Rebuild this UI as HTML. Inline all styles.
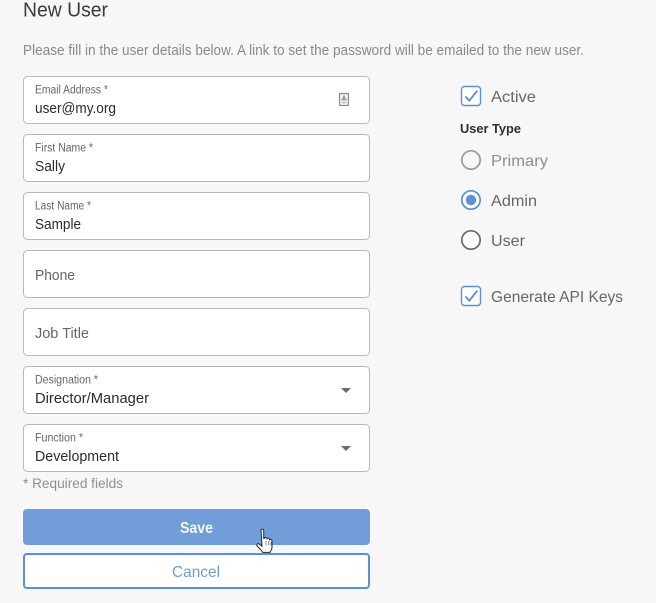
<!DOCTYPE html>
<html><head><meta charset="utf-8"><style>
html,body{margin:0;padding:0;width:656px;height:603px;overflow:hidden;background:#f7f7f7}
svg{display:block}
text{font-family:"Liberation Sans",sans-serif}
.f{fill:#fff;stroke:#b8b8b8;stroke-width:1}
.l{font-size:11.5px;fill:#666}
.v{font-size:15px;fill:#2b2b2b}
.p{font-size:15px;fill:#666}
.o{font-size:16px;fill:#666}
</style></head><body>
<svg width="656" height="603" viewBox="0 0 656 603" xmlns="http://www.w3.org/2000/svg">
<rect width="656" height="603" fill="#f7f7f7"/>
<text x="23" y="16.5" font-size="20" fill="#3a3a3a" textLength="85" lengthAdjust="spacingAndGlyphs">New User</text>
<text x="23" y="55" font-size="14.5" fill="#8a8a8a" textLength="561" lengthAdjust="spacingAndGlyphs">Please fill in the user details below. A link to set the password will be emailed to the new user.</text>

<rect class="f" x="23.5" y="76.5" width="346" height="47" rx="4"/>
<text class="l" x="35" y="93.5" textLength="73" lengthAdjust="spacingAndGlyphs">Email Address *</text>
<text class="v" x="35" y="113" textLength="81" lengthAdjust="spacingAndGlyphs">user@my.org</text>
<rect x="339.5" y="93.5" width="9" height="12" rx="1" fill="#f2f2f2" stroke="#8a8a8a" stroke-width="1.2"/>
<rect x="343" y="95.5" width="2" height="3" fill="#999"/>
<rect x="341.5" y="98.5" width="5" height="2" fill="#999"/>
<rect x="341.5" y="102" width="5" height="1.2" fill="#bbb"/>

<rect class="f" x="23.5" y="134.5" width="346" height="47" rx="4"/>
<text class="l" x="35" y="151.5" textLength="58" lengthAdjust="spacingAndGlyphs">First Name *</text>
<text class="v" x="35" y="171" textLength="30" lengthAdjust="spacingAndGlyphs">Sally</text>

<rect class="f" x="23.5" y="192.5" width="346" height="47" rx="4"/>
<text class="l" x="35" y="209.5" textLength="56" lengthAdjust="spacingAndGlyphs">Last Name *</text>
<text class="v" x="35" y="229" textLength="46" lengthAdjust="spacingAndGlyphs">Sample</text>

<rect class="f" x="23.5" y="250.5" width="346" height="47" rx="4"/>
<text class="p" x="35" y="280" textLength="40" lengthAdjust="spacingAndGlyphs">Phone</text>

<rect class="f" x="23.5" y="308.5" width="346" height="47" rx="4"/>
<text class="p" x="35" y="338" textLength="54" lengthAdjust="spacingAndGlyphs">Job Title</text>

<rect class="f" x="23.5" y="366.5" width="346" height="47" rx="4"/>
<text class="l" x="35" y="383.5" textLength="63" lengthAdjust="spacingAndGlyphs">Designation *</text>
<text class="v" x="35" y="403" textLength="114" lengthAdjust="spacingAndGlyphs">Director/Manager</text>
<path d="M341 388h10l-5 5z" fill="#6b6b6b"/>

<rect class="f" x="23.5" y="424.5" width="346" height="47" rx="4"/>
<text class="l" x="35" y="441.5" textLength="48" lengthAdjust="spacingAndGlyphs">Function *</text>
<text class="v" x="35" y="461" textLength="84" lengthAdjust="spacingAndGlyphs">Development</text>
<path d="M341 446h10l-5 5z" fill="#6b6b6b"/>

<text x="23" y="488" font-size="13.5" fill="#8f8f8f" textLength="100" lengthAdjust="spacingAndGlyphs">* Required fields</text>

<rect x="23" y="509" width="347" height="36" rx="4" fill="#719ed8"/>
<text x="180" y="533" font-size="15.5" font-weight="bold" fill="#f4f7fc" textLength="33" lengthAdjust="spacingAndGlyphs">Save</text>
<rect x="24" y="554" width="345" height="34" rx="3" fill="#fff" stroke="#5b90d6" stroke-width="2"/>
<text x="172" y="577" font-size="16" fill="#6d9bdb" textLength="48" lengthAdjust="spacingAndGlyphs">Cancel</text>

<path d="M261 530.5c0-1.9 2.7-1.9 2.7 0v8.3l.6-.3c.2-1.4 2.4-1.4 2.6.1v.4c.3-1.2 2.5-1.1 2.6.3v.7c.4-1 2.4-.9 2.5.6v6.4c0 2.4-.9 3.7-1.8 4.6v.8h-7.6l-.5-1.1-5-5.4c-1-1.4.8-3 2.2-1.8l2.7 2.2z" fill="#fff" stroke="#2a2a2a" stroke-width="1" stroke-linejoin="round"/>
<path d="M266 541v4.5M268.8 541v4.5M271 541.5v4" stroke="#555" stroke-width=".7" fill="none"/>

<rect x="461.5" y="86.5" width="19" height="19" rx="3" fill="#fff" stroke="#5b90d6" stroke-width="1.4"/>
<path d="M465.5 96.5l3.8 4.2 8-10" fill="none" stroke="#5b90d6" stroke-width="1.9"/>
<text class="o" x="491" y="102" textLength="45" lengthAdjust="spacingAndGlyphs">Active</text>

<text x="460" y="133" font-size="13" font-weight="bold" fill="#2f2f2f" textLength="61" lengthAdjust="spacingAndGlyphs">User Type</text>

<circle cx="471" cy="160" r="9.2" fill="#f7f7f7" stroke="#999" stroke-width="1.7"/>
<text x="491" y="166" font-size="16" fill="#8f8f8f" textLength="57" lengthAdjust="spacingAndGlyphs">Primary</text>

<circle cx="471" cy="200" r="9.2" fill="#fff" stroke="#5b90d6" stroke-width="1.7"/>
<circle cx="471" cy="200" r="5.2" fill="#5b90d6"/>
<text class="o" x="491" y="206" textLength="46" lengthAdjust="spacingAndGlyphs">Admin</text>

<circle cx="471" cy="240" r="9.2" fill="#fff" stroke="#6a6a6a" stroke-width="1.7"/>
<text class="o" x="491" y="246" textLength="34" lengthAdjust="spacingAndGlyphs">User</text>

<rect x="461.5" y="286.5" width="19" height="19" rx="3" fill="#fff" stroke="#5b90d6" stroke-width="1.4"/>
<path d="M465.5 296.5l3.8 4.2 8-10" fill="none" stroke="#5b90d6" stroke-width="1.9"/>
<text class="o" x="491" y="302" textLength="132" lengthAdjust="spacingAndGlyphs">Generate API Keys</text>
</svg>
</body></html>
